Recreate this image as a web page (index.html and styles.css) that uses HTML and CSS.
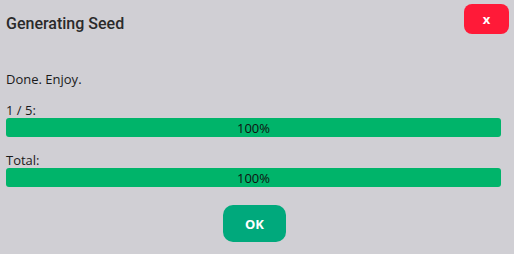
FILE: index.html
```html
<!DOCTYPE html>
<html>
<head>
<meta charset="utf-8">
<link rel="stylesheet" href="styles.css">
</head>
<body>
<div class="dialog">
  <div class="header">
    <h1 class="title">Generating Seed</h1>
    <button class="close">x</button>
  </div>
  <div class="content">
    <p class="status">Done. Enjoy.</p>
    <div class="group">
      <div class="label">1 / 5:</div>
      <div class="bar"><div class="fill" style="width:100%"></div><span class="pct">100%</span></div>
    </div>
    <div class="group">
      <div class="label">Total:</div>
      <div class="bar"><div class="fill" style="width:100%"></div><span class="pct">100%</span></div>
    </div>
    <div class="actions"><button class="ok">OK</button></div>
  </div>
</div>
</body>
</html>
```
FILE: styles.css
```css
html, body {
  margin: 0;
  padding: 0;
  background: #d0cfd4;
  width: 514px;
  height: 254px;
  overflow: hidden;
}
.dialog {
  font-family: "Open Sans", "Noto Sans", sans-serif;
  color: #1a1a1a;
  padding: 4px 4px 0 6px;
}
.header {
  display: flex;
  justify-content: space-between;
  align-items: flex-start;
  height: 34px;
}
.title {
  margin: 9px 0 0 0;
  font-family: Roboto, "Noto Sans", sans-serif;
  font-size: 16px;
  font-weight: 500;
  color: #2a2a2a;
  line-height: 22px;
}
.close {
  width: 45px;
  height: 30px;
  border: none;
  border-radius: 8px;
  background: #ff1a38;
  color: #fff;
  font-family: "Noto Sans", sans-serif;
  font-weight: 700;
  font-size: 13px;
  padding: 0;
  margin-right: 1px;
}
.content {
  padding-right: 9px;
}
.status {
  margin: 31px 0 0 0;
  font-size: 13px;
  line-height: 20px;
}
.group {
  margin-top: 13px;
}
.group + .group {
  margin-top: 15px;
}
.label {
  font-size: 13px;
  line-height: 16px;
}
.bar {
  position: relative;
  height: 19px;
  border-radius: 3px;
  background: #c0c0c0;
  overflow: hidden;
}
.fill {
  height: 100%;
  background: #00b46a;
}
.pct {
  position: absolute;
  inset: 0;
  display: flex;
  align-items: center;
  justify-content: center;
  font-size: 13px;
  color: #111;
}
.actions {
  display: flex;
  justify-content: center;
  margin-top: 18px;
  padding-left: 2px;
}
.ok {
  width: 63px;
  height: 37px;
  border: none;
  border-radius: 10px;
  background: #00a97c;
  color: #fff;
  font-family: "Noto Sans", sans-serif;
  font-weight: 700;
  font-size: 13px;
}
```
